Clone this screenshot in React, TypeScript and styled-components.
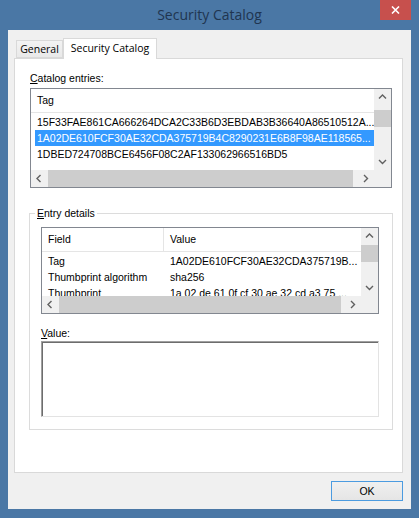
import styled, { createGlobalStyle } from 'styled-components';

const GlobalStyle = createGlobalStyle`
  html, body {
    margin: 0;
    padding: 0;
  }

  body {
    background: #4a77a5;
    font-family: "Liberation Sans", Arial, sans-serif;
    color: #000;
  }

  * {
    box-sizing: border-box;
  }
`;

const Window = styled.div`
  width: 419px;
  height: 518px;
  display: flex;
  flex-direction: column;
  background: #4a77a5;
  overflow: hidden;
`;

const TitleBar = styled.div`
  height: 30px;
  display: grid;
  grid-template-columns: 1fr auto 1fr;
  align-items: start;
`;

const TitleText = styled.div`
  grid-column: 2;
  line-height: 30px;
  font-family: "Open Sans", "Noto Sans", sans-serif;
  font-size: 14px;
  color: #1f3550;
`;

const CloseButton = styled.div`
  grid-column: 3;
  justify-self: end;
  width: 31px;
  height: 20px;
  margin-right: 8px;
  background: #c7504d;
  display: flex;
  align-items: center;
  justify-content: center;
`;

const Client = styled.div`
  flex: 1;
  margin: 0 8px 9px;
  background: #f0f0f0;
  padding: 8px 8px 0 6px;
  display: flex;
  flex-direction: column;
`;

const TabStrip = styled.div`
  height: 20px;
  display: flex;
  align-items: flex-end;
  padding-left: 2px;
  position: relative;
  z-index: 1;
`;

const Tab = styled.div<{ $active?: boolean; $width: number }>`
  width: ${(p) => p.$width}px;
  height: ${(p) => (p.$active ? 21 : 18)}px;
  margin-bottom: ${(p) => (p.$active ? -1 : 0)}px;
  border: 1px solid #d9d9d9;
  border-bottom: ${(p) => (p.$active ? 'none' : '1px solid #d9d9d9')};
  background: ${(p) => (p.$active ? '#fff' : 'linear-gradient(#f3f3f3, #e9e9e9)')};
  font-family: "Open Sans", "Noto Sans", sans-serif;
  font-size: 10.5px;
  display: flex;
  align-items: center;
  justify-content: center;
  padding-bottom: ${(p) => (p.$active ? 3 : 0)}px;
`;

const TabPanel = styled.div`
  height: 415px;
  border: 1px solid #d9d9d9;
  background: #fff;
  padding: 13px 0 0 15px;
`;

const FieldLabel = styled.div<{ $top?: number; $gap: number }>`
  font-size: 10.5px;
  line-height: 13px;
  height: 13px;
  margin-top: ${(p) => p.$top ?? 0}px;
  margin-bottom: ${(p) => p.$gap}px;
`;

const ListFrame = styled.div<{ $width: number; $height: number }>`
  width: ${(p) => p.$width}px;
  height: ${(p) => p.$height}px;
  border: 1px solid #828790;
  background: #fff;
  display: grid;
  grid-template-columns: 1fr 17px;
  grid-template-rows: 1fr 17px;
  font-size: 10.5px;
`;

const ListContent = styled.div`
  overflow: hidden;
  min-width: 0;
`;

const HeaderRow = styled.div<{ $columns: string }>`
  height: 24px;
  display: grid;
  grid-template-columns: ${(p) => p.$columns};
  border-bottom: 1px solid #e5e5e5;
  margin-bottom: 1px;
`;

const HeaderCell = styled.div<{ $divider?: boolean }>`
  line-height: 23px;
  padding-left: 6px;
  border-right: ${(p) => (p.$divider ? '1px solid #e5e5e5' : 'none')};
  white-space: nowrap;
  overflow: hidden;
`;

const CatalogRow = styled.div<{ $selected?: boolean }>`
  height: 16px;
  line-height: 16px;
  margin-left: 4px;
  padding-left: 2px;
  white-space: nowrap;
  overflow: hidden;
  background: ${(p) => (p.$selected ? '#3399ff' : 'transparent')};
  color: ${(p) => (p.$selected ? '#fff' : '#000')};
`;

const DetailRow = styled.div`
  height: 16px;
  display: grid;
  grid-template-columns: 122px 1fr;
`;

const DetailCell = styled.div`
  line-height: 16px;
  padding-left: 6px;
  white-space: nowrap;
  overflow: hidden;
`;

const VScroll = styled.div`
  display: flex;
  flex-direction: column;
  background: #f0f0f0;
`;

const HScroll = styled.div`
  display: flex;
  background: #f0f0f0;
`;

const Corner = styled.div`
  background: #f0f0f0;
`;

const ArrowButton = styled.div`
  width: 17px;
  height: 17px;
  flex: none;
  display: flex;
  align-items: center;
  justify-content: center;
`;

const VTrack = styled.div`
  flex: 1;
  display: flex;
  flex-direction: column;
`;

const HTrack = styled.div`
  flex: 1;
  display: flex;
`;

const VThumb = styled.div<{ $offset: number }>`
  margin-top: ${(p) => p.$offset}px;
  height: 17px;
  background: #cdcdcd;
`;

const HThumb = styled.div<{ $size: number }>`
  width: ${(p) => p.$size}px;
  background: #cdcdcd;
`;

const Group = styled.fieldset`
  margin: 18px 0 0 -1px;
  width: 364px;
  min-width: 0;
  padding: 0;
  border: 1px solid #dcdcdc;
`;

const GroupLegend = styled.legend`
  margin-left: 5px;
  padding: 0 2px;
  font-size: 10.5px;
  line-height: 14px;
`;

const GroupBody = styled.div`
  padding: 7px 12px 12px 11px;
`;

const ValueBox = styled.div`
  width: 338px;
  height: 76px;
  background: #fff;
  border: 1px solid;
  border-color: #a0a0a0 #e3e3e3 #e3e3e3 #a0a0a0;
  box-shadow: inset 1px 1px 0 #6d6d6d;
`;

const Footer = styled.div`
  display: flex;
  justify-content: flex-end;
  padding-top: 8px;
`;

const OkButton = styled.button`
  width: 72px;
  height: 20px;
  padding: 0;
  border: 1px solid #4b9be0;
  background: linear-gradient(#f0f0f0, #e5e5e5);
  font-family: "Liberation Sans", Arial, sans-serif;
  font-size: 10.5px;
  color: #000;
`;

type Dir = 'up' | 'down' | 'left' | 'right';

const chevrons: Record<Dir, string> = {
  up: '1,5.5 4.5,2 8,5.5',
  down: '1,3 4.5,6.5 8,3',
  left: '5.5,1 2,4.5 5.5,8',
  right: '3,1 6.5,4.5 3,8',
};

function Arrow({ dir }: { dir: Dir }) {
  return (
    <ArrowButton>
      <svg width="9" height="9" viewBox="0 0 9 9">
        <polyline points={chevrons[dir]} fill="none" stroke="#606060" strokeWidth="1.4" />
      </svg>
    </ArrowButton>
  );
}

function VerticalBar({ offset }: { offset: number }) {
  return (
    <VScroll>
      <Arrow dir="up" />
      <VTrack>
        <VThumb $offset={offset} />
      </VTrack>
      <Arrow dir="down" />
    </VScroll>
  );
}

function HorizontalBar({ size }: { size: number }) {
  return (
    <HScroll>
      <Arrow dir="left" />
      <HTrack>
        <HThumb $size={size} />
      </HTrack>
      <Arrow dir="right" />
    </HScroll>
  );
}

const catalogEntries = [
  '15F33FAE861CA666264DCA2C33B6D3EBDAB3B36640A86510512A...',
  '1A02DE610FCF30AE32CDA375719B4C8290231E6B8F98AE118565...',
  '1DBED724708BCE6456F08C2AF133062966516BD5',
];

const details = [
  ['Tag', '1A02DE610FCF30AE32CDA375719B...'],
  ['Thumbprint algorithm', 'sha256'],
  ['Thumbprint', '1a 02 de 61 0f cf 30 ae 32 cd a3 75 ...'],
];

export default function App() {
  return (
    <>
      <GlobalStyle />
      <Window>
        <TitleBar>
          <TitleText>Security Catalog</TitleText>
          <CloseButton>
            <svg width="9" height="8" viewBox="0 0 9 8">
              <path d="M1 0.5 L8 7.5 M8 0.5 L1 7.5" stroke="#fff" strokeWidth="1.6" />
            </svg>
          </CloseButton>
        </TitleBar>

        <Client>
          <TabStrip>
            <Tab $width={47}>General</Tab>
            <Tab $width={94} $active>
              Security Catalog
            </Tab>
          </TabStrip>

          <TabPanel>
            <FieldLabel $gap={3}>
              <u>C</u>atalog entries:
            </FieldLabel>
            <ListFrame $width={362} $height={100}>
              <ListContent>
                <HeaderRow $columns="1fr">
                  <HeaderCell>Tag</HeaderCell>
                </HeaderRow>
                {catalogEntries.map((entry, i) => (
                  <CatalogRow key={entry} $selected={i === 1}>
                    {entry}
                  </CatalogRow>
                ))}
              </ListContent>
              <VerticalBar offset={4} />
              <HorizontalBar size={305} />
              <Corner />
            </ListFrame>

            <Group>
              <GroupLegend>
                <u>E</u>ntry details
              </GroupLegend>
              <GroupBody>
                <ListFrame $width={338} $height={87}>
                  <ListContent>
                    <HeaderRow $columns="122px 1fr">
                      <HeaderCell $divider>Field</HeaderCell>
                      <HeaderCell>Value</HeaderCell>
                    </HeaderRow>
                    {details.map(([field, value]) => (
                      <DetailRow key={field}>
                        <DetailCell>{field}</DetailCell>
                        <DetailCell>{value}</DetailCell>
                      </DetailRow>
                    ))}
                  </ListContent>
                  <VerticalBar offset={0} />
                  <HorizontalBar size={282} />
                  <Corner />
                </ListFrame>
                <FieldLabel $top={13} $gap={1}>
                  <u>V</u>alue:
                </FieldLabel>
                <ValueBox />
              </GroupBody>
            </Group>
          </TabPanel>

          <Footer>
            <OkButton>OK</OkButton>
          </Footer>
        </Client>
      </Window>
    </>
  );
}
